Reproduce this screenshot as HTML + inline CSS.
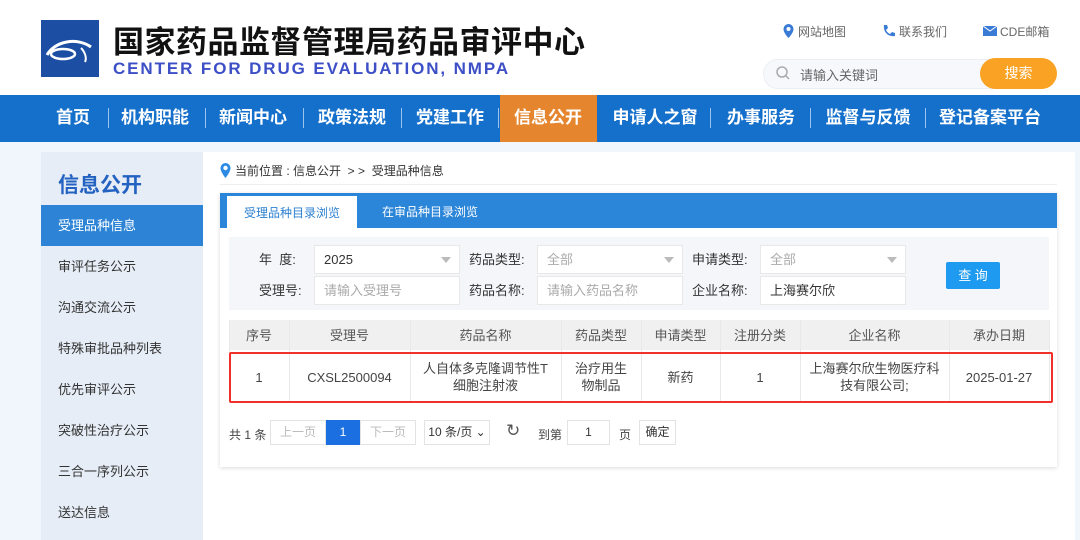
<!DOCTYPE html>
<html><head><meta charset="utf-8"><style>
*{margin:0;padding:0;box-sizing:border-box}
body{width:1080px;height:540px;overflow:hidden;background:#f1f6fd;font-family:"Liberation Sans","Noto Sans CJK SC",sans-serif;position:relative;color:#333}
.a{position:absolute}
.hdr{left:0;top:0;width:1080px;height:95px;background:#fff}
.nav{left:0;top:95px;width:1080px;height:47px;background:#1570cb}
.navt span{position:absolute;top:0;height:47px;line-height:46px;color:#fff;font-size:17px;font-weight:bold;transform:translateX(-50%);white-space:nowrap}
.sep{position:absolute;top:108px;width:1px;height:20px;background:#9cc3ec}
.side{left:41px;top:152px;width:162px;height:388px;background:#e6edf6}
.si{position:absolute;left:58px;font-size:13px;color:#333;line-height:1}
.main{left:203px;top:152px;width:872px;height:388px;background:#fff}
.lbl{position:absolute;font-size:13px;color:#333;line-height:1}
.inp{position:absolute;background:#fff;border:1px solid #e8e8e8;height:29px;font-size:13px;line-height:27px;padding-left:9px;color:#aaa}
.inp.v{color:#333}
.tri{position:absolute;right:8px;top:11px;border-left:5px solid transparent;border-right:5px solid transparent;border-top:6px solid #bbb}
.th,.td{position:absolute;text-align:center;font-size:13px;display:flex;align-items:center;justify-content:center;line-height:17px}
.th{top:320px;height:30px;color:#555}
.td{top:352px;height:50px;color:#444}
.vl{position:absolute;top:320px;height:82px;width:1px;background:#e8e8e8}
.pb{position:absolute;top:420px;height:25px;border:1px solid #e3e3e3;font-size:12px;line-height:23px;text-align:center;color:#bbb;background:#fff}
</style></head><body>
<div class="a hdr"></div>
<div class="a" style="left:41px;top:20px;width:58px;height:57px;background:#1c4fa4"></div>
<svg class="a" style="left:41px;top:20px" width="58" height="57" viewBox="0 0 58 57"><path d="M6 35c8-14 30-18 44-8" stroke="#fff" stroke-width="3" fill="none"/><ellipse cx="22" cy="34" rx="12" ry="5" stroke="#fff" stroke-width="2.5" fill="none"/><path d="M40 28c4 4 6 10 4 14" stroke="#fff" stroke-width="2" fill="none"/></svg>
<div class="a" style="left:113px;top:17px;font-size:31px;font-weight:bold;color:#111;letter-spacing:0.5px;white-space:nowrap">国家药品监督管理局药品审评中心</div>
<div class="a" style="left:113px;top:59px;font-size:17px;font-weight:bold;color:#3d4fc6;letter-spacing:1.9px;white-space:nowrap">CENTER FOR DRUG EVALUATION, NMPA</div>
<svg class="a" style="left:783px;top:24px" width="11" height="14" viewBox="0 0 11 14"><path d="M5.5 0a5 5 0 0 0-5 5c0 4 5 9 5 9s5-5 5-9a5 5 0 0 0-5-5z" fill="#3a7bd5"/><circle cx="5.5" cy="5" r="2" fill="#fff"/></svg>
<div class="a" style="left:798px;top:23px;font-size:12px;color:#666">网站地图</div>
<svg class="a" style="left:882px;top:24px" width="14" height="14" viewBox="0 0 14 14"><path d="M2 1l3 0 1 3-2 2c1 2 2 3 4 4l2-2 3 1 0 3c-7 1-12-4-11-11z" fill="#3a7bd5"/></svg>
<div class="a" style="left:899px;top:23px;font-size:12px;color:#666">联系我们</div>
<svg class="a" style="left:983px;top:26px" width="14" height="10" viewBox="0 0 14 10"><rect width="14" height="10" fill="#3a7bd5"/><path d="M0 0l7 5 7-5" stroke="#fff" fill="none"/></svg>
<div class="a" style="left:1000px;top:23px;font-size:12px;color:#666">CDE邮箱</div>
<div class="a" style="left:763px;top:59px;width:280px;height:30px;border-radius:15px;background:#f6f8fc;border:1px solid #eceef2"></div>
<svg class="a" style="left:775px;top:65px" width="16" height="16" viewBox="0 0 16 16"><circle cx="7" cy="7" r="5" stroke="#aaa" stroke-width="1.5" fill="none"/><path d="M11 11l3 3" stroke="#aaa" stroke-width="1.5"/></svg>
<div class="a" style="left:800px;top:65px;font-size:13px;color:#666">请输入关键词</div>
<div class="a" style="left:980px;top:58px;width:77px;height:31px;border-radius:16px;background:#f9a223;color:#fff;font-size:14px;text-align:center;line-height:31px">搜索</div>
<div class="a nav"></div>
<div class="a" style="left:500px;top:95px;width:97px;height:47px;background:#e5862f"></div>
<div class="a navt" style="left:0;top:95px;width:1080px;height:47px">
<span style="left:73px">首页</span><span style="left:155px">机构职能</span><span style="left:253px">新闻中心</span><span style="left:352px">政策法规</span><span style="left:450px">党建工作</span><span style="left:548px">信息公开</span><span style="left:655px">申请人之窗</span><span style="left:761px">办事服务</span><span style="left:868px">监督与反馈</span><span style="left:990px">登记备案平台</span>
</div>
<div class="sep" style="left:108px"></div><div class="sep" style="left:205px"></div><div class="sep" style="left:303px"></div><div class="sep" style="left:401px"></div><div class="sep" style="left:498px"></div><div class="sep" style="left:710px"></div><div class="sep" style="left:810px"></div><div class="sep" style="left:925px"></div>
<div class="a side"></div>
<div class="a" style="left:58px;top:169px;font-size:21px;font-weight:bold;color:#2462c2">信息公开</div>
<div class="a" style="left:41px;top:205px;width:162px;height:41px;background:#2d84d6"></div>
<div class="si" style="top:219px;color:#fff">受理品种信息</div>
<div class="si" style="top:260px">审评任务公示</div>
<div class="si" style="top:301px">沟通交流公示</div>
<div class="si" style="top:342px">特殊审批品种列表</div>
<div class="si" style="top:383px">优先审评公示</div>
<div class="si" style="top:424px">突破性治疗公示</div>
<div class="si" style="top:465px">三合一序列公示</div>
<div class="si" style="top:506px">送达信息</div>
<div class="a main"></div>
<svg class="a" style="left:220px;top:163px" width="11" height="15" viewBox="0 0 11 15"><path d="M5.5 0a5 5 0 0 0-5 5c0 4 5 10 5 10s5-6 5-10a5 5 0 0 0-5-5z" fill="#2d8be6"/><circle cx="5.5" cy="5" r="2.2" fill="#fff"/></svg>
<div class="a" style="left:235px;top:162px;font-size:12px;color:#333">当前位置 : 信息公开 &nbsp;&gt; &gt; &nbsp;受理品种信息</div>
<div class="a" style="left:220px;top:184px;width:837px;height:1px;background:#eee"></div>
<div class="a" style="left:220px;top:193px;width:837px;height:274px;background:#fff;box-shadow:0 1px 4px rgba(0,0,0,.15)"></div>
<div class="a" style="left:220px;top:193px;width:837px;height:35px;background:#2b85d8"></div>
<div class="a" style="left:227px;top:196px;width:130px;height:32px;background:#fff;color:#2b7fd0;font-size:12px;text-align:center;line-height:34px;white-space:nowrap">受理品种目录浏览</div>
<div class="a" style="left:382px;top:205px;font-size:12px;color:#fff;line-height:1.2">在审品种目录浏览</div>
<div class="a" style="left:229px;top:237px;width:820px;height:73px;background:#f4f6f9"></div>
<div class="lbl" style="left:259px;top:253px">年 &nbsp;度:</div>
<div class="lbl" style="left:259px;top:284px">受理号:</div>
<div class="lbl" style="left:469px;top:253px">药品类型:</div>
<div class="lbl" style="left:469px;top:284px">药品名称:</div>
<div class="lbl" style="left:692px;top:253px">申请类型:</div>
<div class="lbl" style="left:692px;top:284px">企业名称:</div>
<div class="inp v" style="left:314px;top:245px;width:146px">2025<i class="tri"></i></div>
<div class="inp" style="left:314px;top:276px;width:146px">请输入受理号</div>
<div class="inp" style="left:537px;top:245px;width:146px">全部<i class="tri"></i></div>
<div class="inp" style="left:537px;top:276px;width:146px">请输入药品名称</div>
<div class="inp" style="left:760px;top:245px;width:146px">全部<i class="tri"></i></div>
<div class="inp v" style="left:760px;top:276px;width:146px">上海赛尔欣</div>
<div class="a" style="left:946px;top:262px;width:54px;height:27px;background:#1e9bf0;border-radius:2px;color:#fff;font-size:13px;text-align:center;line-height:27px">查 询</div>
<div class="a" style="left:229px;top:320px;width:820px;height:30px;background:#f0f0f0"></div>
<div class="vl" style="left:229px"></div><div class="vl" style="left:289px"></div><div class="vl" style="left:410px"></div><div class="vl" style="left:561px"></div><div class="vl" style="left:641px"></div><div class="vl" style="left:720px"></div><div class="vl" style="left:800px"></div><div class="vl" style="left:949px"></div><div class="vl" style="left:1049px"></div>
<div class="th" style="left:229px;width:60px">序号</div>
<div class="th" style="left:289px;width:121px">受理号</div>
<div class="th" style="left:410px;width:151px">药品名称</div>
<div class="th" style="left:561px;width:80px">药品类型</div>
<div class="th" style="left:641px;width:79px">申请类型</div>
<div class="th" style="left:720px;width:80px">注册分类</div>
<div class="th" style="left:800px;width:149px">企业名称</div>
<div class="th" style="left:949px;width:100px">承办日期</div>
<div class="td" style="left:229px;width:60px">1</div>
<div class="td" style="left:289px;width:121px">CXSL2500094</div>
<div class="td" style="left:410px;width:151px;padding:0 6px">人自体多克隆调节性T<br>细胞注射液</div>
<div class="td" style="left:561px;width:80px;padding:0 6px">治疗用生<br>物制品</div>
<div class="td" style="left:641px;width:79px">新药</div>
<div class="td" style="left:720px;width:80px">1</div>
<div class="td" style="left:800px;width:149px;padding:0 4px">上海赛尔欣生物医疗科<br>技有限公司;</div>
<div class="td" style="left:949px;width:100px">2025-01-27</div>
<div class="a" style="left:229px;top:352px;width:824px;height:51px;border:2px solid #f0302a;border-radius:2px"></div>
<div class="a" style="left:229px;top:426px;font-size:12px;color:#444">共 1 条</div>
<div class="pb" style="left:270px;width:56px">上一页</div>
<div class="pb" style="left:326px;width:34px;background:#1c6fe0;color:#fff;border-color:#1c6fe0">1</div>
<div class="pb" style="left:360px;width:56px">下一页</div>
<div class="pb" style="left:424px;width:66px;color:#333">10 条/页 ⌄</div>
<div class="a" style="left:506px;top:421px;font-size:17px;color:#555">↻</div>
<div class="a" style="left:538px;top:426px;font-size:12px;color:#444">到第</div>
<div class="pb" style="left:567px;width:43px;color:#333">1</div>
<div class="a" style="left:619px;top:426px;font-size:12px;color:#444">页</div>
<div class="pb" style="left:639px;width:37px;color:#333">确定</div>
</body></html>
